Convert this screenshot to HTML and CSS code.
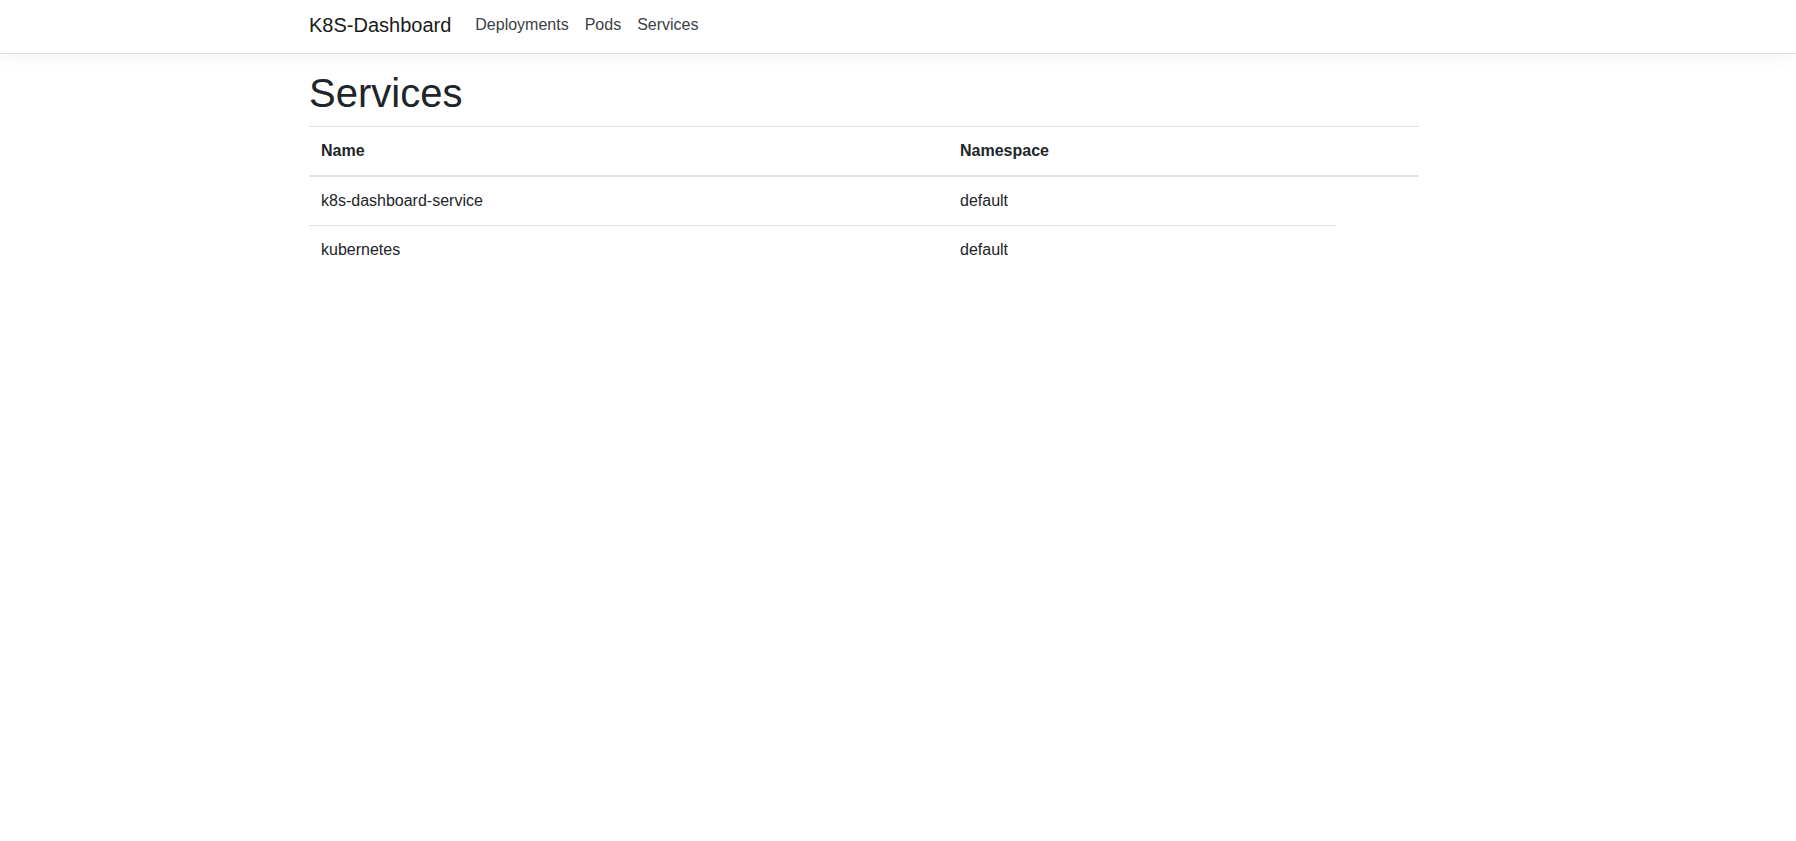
FILE: index.html
```html
<!DOCTYPE html>
<html lang="en">
<head>
<meta charset="utf-8">
<title>K8S-Dashboard</title>
<link rel="stylesheet" href="styles.css">
</head>
<body>
<nav class="navbar">
  <div class="container nav-inner">
    <a class="brand" href="#">K8S-Dashboard</a>
    <ul class="nav-links">
      <li><a href="#">Deployments</a></li>
      <li><a href="#">Pods</a></li>
      <li><a href="#">Services</a></li>
    </ul>
  </div>
</nav>
<main class="container">
  <h1 class="title">Services</h1>
  <table class="table">
    <colgroup>
      <col class="col-name">
      <col class="col-ns">
      <col class="col-extra">
    </colgroup>
    <thead>
      <tr><th>Name</th><th>Namespace</th><th></th></tr>
    </thead>
    <tbody>
      <tr><td>k8s-dashboard-service</td><td>default</td></tr>
      <tr><td>kubernetes</td><td>default</td></tr>
    </tbody>
  </table>
</main>
</body>
</html>
```
FILE: styles.css
```css
html, body {
  margin: 0;
  padding: 0;
  background: #fff;
}
body {
  font-family: "Liberation Sans", Arial, sans-serif;
  font-size: 16px;
  line-height: 24px;
  color: #212529;
}
.container {
  width: 1110px;
  margin-left: 309px;
}
.navbar {
  box-sizing: border-box;
  height: 54px;
  border-bottom: 1px solid #dedede;
  box-shadow: 0 3px 18px rgba(0, 0, 0, 0.05);
  background: #fff;
}
.nav-inner {
  display: flex;
  align-items: flex-start;
  padding-top: 10px;
}
.brand {
  font-size: 20px;
  line-height: 30px;
  color: #1a1a1a;
  text-decoration: none;
  margin-right: 16px;
}
.nav-links {
  display: flex;
  list-style: none;
  margin: 0;
  padding: 3px 0 0;
}
.nav-links a {
  display: block;
  padding: 0 8px;
  line-height: 24px;
  color: #3a3f45;
  text-decoration: none;
}
.title {
  margin: 15px 0 9px;
  font-size: 40px;
  line-height: 48px;
  font-weight: 400;
  color: #212529;
}
.table {
  width: 1110px;
  border-collapse: collapse;
  table-layout: fixed;
}
.col-name { width: 639px; }
.col-ns { width: 388px; }
.col-extra { width: 83px; }
.table th,
.table td {
  padding: 12px;
  text-align: left;
  vertical-align: top;
  border-top: 1px solid #dee2e6;
}
.table th {
  font-weight: 700;
  border-bottom: 2px solid #dee2e6;
}
```
